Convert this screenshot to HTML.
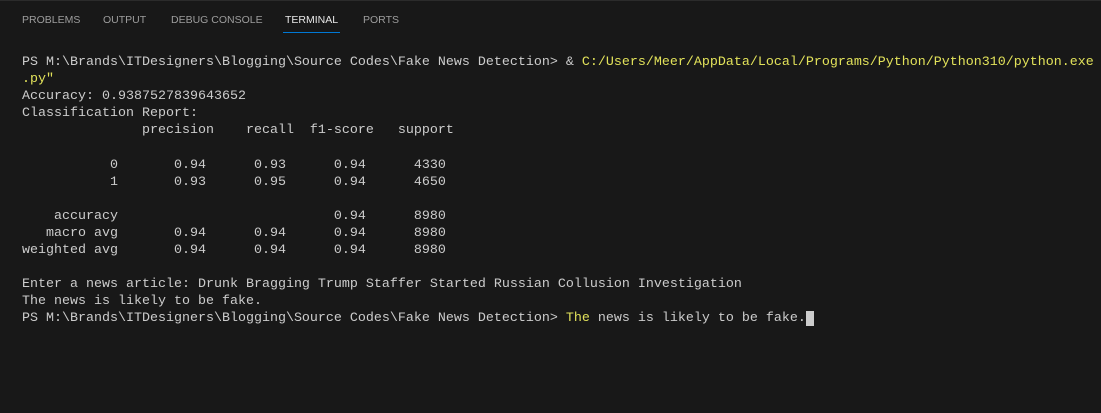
<!DOCTYPE html>
<html><head><meta charset="utf-8"><style>
html,body{margin:0;padding:0;background:#181818;width:1101px;height:413px;overflow:hidden}
.top{position:absolute;left:0;top:0;width:1101px;height:1px;background:#2b2b2b}
.tab{position:absolute;top:14px;font:10.5px "Liberation Sans",sans-serif;color:#9d9d9d}
.tab.act{color:#e7e7e7}
.ul{position:absolute;left:283px;top:32px;width:57px;height:1px;background:#0078d4}
pre{position:absolute;left:22px;top:54px;margin:0;font:13.33px/17.1px "Liberation Mono",monospace;color:#cccccc;white-space:pre}
.y{color:#e2e25a}
.c{background:#cccccc;color:#cccccc}
</style></head><body>
<div class="top"></div>
<div class="tab" style="left:22px">PROBLEMS</div>
<div class="tab" style="left:103px">OUTPUT</div>
<div class="tab" style="left:171px">DEBUG CONSOLE</div>
<div class="tab act" style="left:285px">TERMINAL</div>
<div class="tab" style="left:363px">PORTS</div>
<div class="ul"></div>
<pre>PS M:\Brands\ITDesigners\Blogging\Source Codes\Fake News Detection&gt; &amp; <span class="y">C:/Users/Meer/AppData/Local/Programs/Python/Python310/python.exe</span>
<span class="y">.py"</span>
Accuracy: 0.9387527839643652
Classification Report:
               precision    recall  f1-score   support

           0       0.94      0.93      0.94      4330
           1       0.93      0.95      0.94      4650

    accuracy                           0.94      8980
   macro avg       0.94      0.94      0.94      8980
weighted avg       0.94      0.94      0.94      8980

Enter a news article: Drunk Bragging Trump Staffer Started Russian Collusion Investigation
The news is likely to be fake.
PS M:\Brands\ITDesigners\Blogging\Source Codes\Fake News Detection&gt; <span class="y">The</span> news is likely to be fake.<span class="c"> </span></pre>
</body></html>
